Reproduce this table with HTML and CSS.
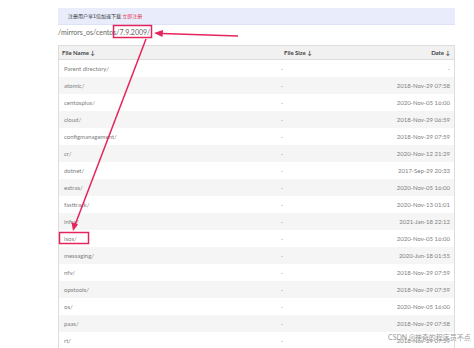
FILE: index.html
```html
<!DOCTYPE html>
<html>
<head lang="zh">
    <meta charset="UTF-8">
    <title>/mirrors_os/centos/7.9.2009/</title>
    <link rel="stylesheet" href="styles.css">
</head>
<body>
<div class="g-page">
    <div class="m-notice">注册用户享1倍加速下载 <a href="#">立即注册</a></div>
    <div class="m-crumb">/mirrors_os/centos/7.9.2009/</div>
    <div class="m-listing">
        <div class="row hd">
            <span class="name">File Name &darr;</span>
            <span class="size">File Size &darr;</span>
            <span class="date">Date &darr;</span>
        </div>
        <div class="row"><span class="name">Parent directory/</span><span class="size">-</span><span class="date">-</span></div>
        <div class="row"><span class="name">atomic/</span><span class="size">-</span><span class="date">2018-Nov-29 07:58</span></div>
        <div class="row"><span class="name">centosplus/</span><span class="size">-</span><span class="date">2020-Nov-05 16:00</span></div>
        <div class="row"><span class="name">cloud/</span><span class="size">-</span><span class="date">2018-Nov-29 06:59</span></div>
        <div class="row"><span class="name">configmanagement/</span><span class="size">-</span><span class="date">2018-Nov-29 07:59</span></div>
        <div class="row"><span class="name">cr/</span><span class="size">-</span><span class="date">2020-Nov-12 21:29</span></div>
        <div class="row"><span class="name">dotnet/</span><span class="size">-</span><span class="date">2017-Sep-29 20:33</span></div>
        <div class="row"><span class="name">extras/</span><span class="size">-</span><span class="date">2020-Nov-05 16:00</span></div>
        <div class="row"><span class="name">fasttrack/</span><span class="size">-</span><span class="date">2020-Nov-13 01:01</span></div>
        <div class="row"><span class="name">infra/</span><span class="size">-</span><span class="date">2021-Jan-18 22:12</span></div>
        <div class="row"><span class="name">isos/</span><span class="size">-</span><span class="date">2020-Nov-05 16:00</span></div>
        <div class="row"><span class="name">messaging/</span><span class="size">-</span><span class="date">2020-Jun-18 01:55</span></div>
        <div class="row"><span class="name">nfv/</span><span class="size">-</span><span class="date">2018-Nov-29 07:59</span></div>
        <div class="row"><span class="name">opstools/</span><span class="size">-</span><span class="date">2018-Nov-29 07:59</span></div>
        <div class="row"><span class="name">os/</span><span class="size">-</span><span class="date">2020-Nov-05 16:00</span></div>
        <div class="row"><span class="name">paas/</span><span class="size">-</span><span class="date">2018-Nov-29 07:58</span></div>
        <div class="row"><span class="name">rt/</span><span class="size">-</span><span class="date">2018-Nov-29 07:59</span></div>
    </div>
</div>

<!-- hand drawn marks on top of the screenshot -->
<svg class="m-marks" width="474" height="348" viewBox="0 0 474 348">
    <g fill="none" stroke="#e5245b" stroke-width="1.5">
        <rect x="113.5" y="25.5" width="38" height="12"/>
        <rect x="59.5" y="232.5" width="29" height="11"/>
        <line x1="238" y1="36" x2="162" y2="33.5"/>
        <line x1="146" y1="39" x2="75" y2="225"/>
    </g>
    <g fill="#e5245b">
        <polygon points="154,33 163,30 162.5,37"/>
        <polygon points="73,231 71.5,222 78,224.5"/>
    </g>
</svg>
<div class="m-watermark">CSDN @神奇的程序员不点</div>
</body>
</html>
```

FILE: styles.css
```css
* {
    margin: 0;
    padding: 0;
    box-sizing: border-box;
}
a {
    text-decoration: none;
}
body {
    background-color: #fff;
    font-family: Lato, "Noto Sans CJK SC", sans-serif;
    color: #666;
}
.g-page {
    width: 397px;
    margin-left: 58px;
    padding-top: 8px;
}
.m-notice {
    height: 17px;
    line-height: 17px;
    padding-left: 10px;
    font-size: 5px;
    color: #333;
    background-color: #e9edfb;
    border-bottom: 1px solid #dde3f5;
}
.m-notice a {
    color: #e8344e;
}
.m-crumb {
    height: 20px;
    line-height: 14px;
    font-size: 7px;
    color: #666;
}
.m-listing {
    border-left: 1px solid #ddd;
    border-right: 1px solid #ddd;
}
.m-listing .row {
    display: grid;
    grid-template-columns: 214px 1fr 1fr;
    height: 17px;
    line-height: 17px;
    font-size: 6px;
    color: #808080;
    padding: 0 4px 0 5px;
}
.m-listing .row:nth-child(odd) {
    background-color: #f5f5f5;
}
.m-listing .row.hd {
    height: 15px;
    line-height: 13px;
    padding-left: 3px;
    font-weight: bold;
    color: #444;
    background-color: #f1f1f1;
    border-top: 1px solid #ddd;
    border-bottom: 1px solid #ddd;
}
.m-listing .row.hd .size {
    padding-left: 8px;
}
.m-listing .size {
    padding-left: 3px;
}
.m-listing .date {
    text-align: right;
}
.m-marks {
    position: absolute;
    top: 0;
    left: 0;
    pointer-events: none;
}
.m-watermark {
    position: absolute;
    left: 388px;
    top: 331px;
    font-size: 7px;
    line-height: 12px;
    color: #999;
    white-space: nowrap;
}
```
